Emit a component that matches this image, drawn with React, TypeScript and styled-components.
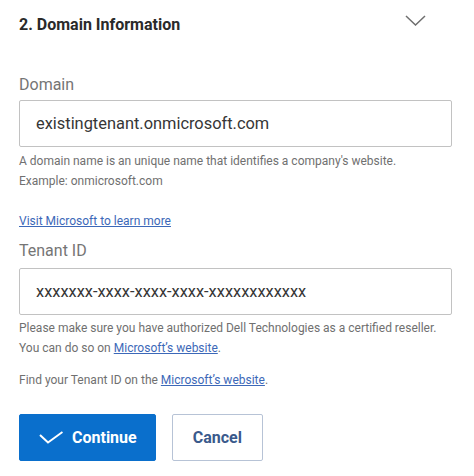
import React from 'react';
import styled, { createGlobalStyle } from 'styled-components';

const GlobalStyle = createGlobalStyle`
  html, body {
    margin: 0;
    padding: 0;
    background: #ffffff;
  }
  body {
    font-family: Roboto, "Liberation Sans", Arial, sans-serif;
    -webkit-font-smoothing: antialiased;
  }
`;

const Panel = styled.section`
  width: 433px;
  padding: 15px 0 0 19px;
`;

const Header = styled.div`
  display: flex;
  align-items: flex-start;
  justify-content: space-between;
  height: 20px;
`;

const Title = styled.h2`
  margin: 0;
  font-size: 16px;
  line-height: 20px;
  font-weight: 700;
  color: #2a2a2a;
`;

const Chevron = styled.svg`
  margin: 0 26px 0 0;
  width: 21px;
  height: 11px;
`;

const Field = styled.div<{ $top: number }>`
  display: flex;
  flex-direction: column;
  margin-top: ${(p) => p.$top}px;
`;

const Label = styled.label<{ $gap: number }>`
  font-size: 16px;
  line-height: 20px;
  color: #757575;
  margin-bottom: ${(p) => p.$gap}px;
`;

const Input = styled.input`
  box-sizing: border-box;
  width: 433px;
  height: 47px;
  padding: 0 16px;
  border: 1px solid #c2c2c2;
  border-radius: 2px;
  font-family: Roboto, "Liberation Sans", Arial, sans-serif;
  font-size: 16.4px;
  color: #363636;
  background: #fff;
  outline: none;
`;

const Help = styled.p<{ $top: number }>`
  margin: ${(p) => p.$top}px 0 0;
  font-size: 12px;
  line-height: 20px;
  color: #707070;
`;

const Link = styled.a`
  color: #3c68b8;
  text-decoration: underline;
  text-underline-offset: 1px;
`;

const Actions = styled.div`
  display: flex;
  gap: 16px;
  margin-top: 24px;
`;

const Button = styled.button<{ $primary?: boolean }>`
  box-sizing: border-box;
  display: inline-flex;
  align-items: center;
  justify-content: center;
  gap: 9px;
  height: 47px;
  padding: ${(p) => (p.$primary ? '0 18px 0 19px' : '0 20px')};
  border: 1px solid ${(p) => (p.$primary ? '#0a6fcc' : '#b7c3d6')};
  border-radius: 2px;
  background: ${(p) => (p.$primary ? '#0a6fcc' : '#ffffff')};
  color: ${(p) => (p.$primary ? '#ffffff' : '#3a5a8c')};
  font-family: Roboto, "Liberation Sans", Arial, sans-serif;
  font-size: 16px;
  font-weight: 700;
  cursor: pointer;
`;

export default function App() {
  return (
    <>
      <GlobalStyle />
      <Panel>
        <Header>
          <Title>2. Domain Information</Title>
          <Chevron viewBox="0 0 21 11" fill="none">
            <path d="M1 1 L10.5 10 L20 1" stroke="#6f6f6f" strokeWidth="1.5" />
          </Chevron>
        </Header>

        <Field $top={40}>
          <Label $gap={5}>Domain</Label>
          <Input defaultValue="existingtenant.onmicrosoft.com" />
        </Field>
        <Help $top={4}>
          A domain name is an unique name that identifies a company's website.
          <br />
          Example: onmicrosoft.com
        </Help>
        <Help $top={20}>
          <Link href="#">Visit Microsoft to learn more</Link>
        </Help>

        <Field $top={10}>
          <Label $gap={7}>Tenant ID</Label>
          <Input defaultValue="xxxxxxx-xxxx-xxxx-xxxx-xxxxxxxxxxxx" />
        </Field>
        <Help $top={3}>
          Please make sure you have authorized Dell Technologies as a certified reseller.
          <br />
          You can do so on <Link href="#">Microsoft’s website</Link>.
        </Help>
        <Help $top={12}>
          Find your Tenant ID on the <Link href="#">Microsoft’s website</Link>.
        </Help>

        <Actions>
          <Button $primary>
            <svg width="24" height="13" viewBox="0 0 24 13" fill="none">
              <path d="M1 4 L9 11.5 L23.5 1" stroke="#ffffff" strokeWidth="2" />
            </svg>
            Continue
          </Button>
          <Button>Cancel</Button>
        </Actions>
      </Panel>
    </>
  );
}
